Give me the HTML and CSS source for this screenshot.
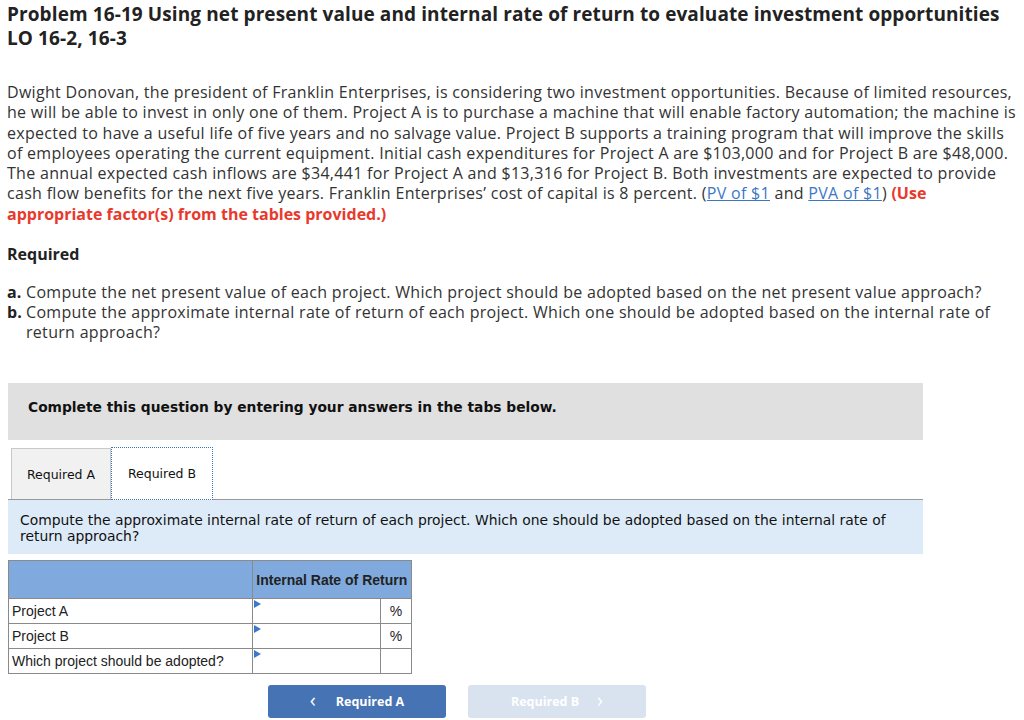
FILE: index.html
```html
<!DOCTYPE html>
<html>
<head>
<meta charset="utf-8">
<link rel="stylesheet" href="styles.css">
</head>
<body>
<div class="page">
  <h1 class="title">Problem 16-19 Using net present value and internal rate of return to evaluate investment opportunities<br>LO 16-2, 16-3</h1>
  <p class="intro">Dwight Donovan, the president of Franklin Enterprises, is considering two investment opportunities. Because of limited resources, he will be able to invest in only one of them. Project A is to purchase a machine that will enable factory automation; the machine is expected to have a useful life of five years and no salvage value. Project B supports a training program that will improve the skills of employees operating the current equipment. Initial cash expenditures for Project A are $103,000 and for Project B are $48,000. The annual expected cash inflows are $34,441 for Project A and $13,316 for Project B. Both investments are expected to provide cash flow benefits for the next five years. Franklin Enterprises’ cost of capital is 8 percent. (<a class="link" href="#">PV of $1</a> and <a class="link" href="#">PVA of $1</a>) <span class="red">(Use appropriate factor(s) from the tables provided.)</span></p>
  <h2 class="req">Required</h2>
  <ol class="reqlist">
    <li><span class="mark">a.</span><span>Compute the net present value of each project. Which project should be adopted based on the net present value approach?</span></li>
    <li><span class="mark">b.</span><span>Compute the approximate internal rate of return of each project. Which one should be adopted based on the internal rate of return approach?</span></li>
  </ol>

  <div class="widget">
    <div class="banner">Complete this question by entering your answers in the tabs below.</div>
    <div class="tabs">
      <div class="tab">Required A</div>
      <div class="tab active">Required B</div>
    </div>
    <div class="prompt">Compute the approximate internal rate of return of each project. Which one should be adopted based on the internal rate of return approach?</div>
    <table class="grid">
      <colgroup><col class="c1"><col class="c2"><col class="c3"></colgroup>
      <tr class="head"><th></th><th colspan="2">Internal Rate of Return</th></tr>
      <tr><td>Project A</td><td class="inp"><span class="tri"></span></td><td class="pct">%</td></tr>
      <tr><td>Project B</td><td class="inp"><span class="tri"></span></td><td class="pct">%</td></tr>
      <tr><td>Which project should be adopted?</td><td class="inp"><span class="tri"></span></td><td class="pct"></td></tr>
    </table>
    <div class="nav">
      <div class="btn prev"><span class="chev">&lsaquo;</span>Required A</div>
      <div class="btn next">Required B<span class="chev">&rsaquo;</span></div>
    </div>
  </div>
</div>
</body>
</html>
```

FILE: styles.css
```css
html, body { margin: 0; padding: 0; background: #fff; }
.page {
  padding: 2px 0 0 7px;
  width: 1012px;
  font-family: "Open Sans", Lato, sans-serif;
  color: #333;
}
.title {
  margin: 0;
  font-size: 19px;
  line-height: 24px;
  font-weight: 700;
  letter-spacing: 0.1px;
  color: #222;
}
.intro {
  margin: 32px 0 0 0;
  font-size: 16px;
  letter-spacing: 0.3px;
  line-height: 20.3px;
}
.link { color: #3b78c4; text-decoration: underline; }
.red { color: #e8392c; font-weight: 700; letter-spacing: 0; }
.req {
  margin: 20px 0 0 0;
  font-size: 16px;
  line-height: 20px;
  font-weight: 700;
  color: #222;
}
.reqlist {
  list-style: none;
  margin: 18px 0 0 0;
  padding: 0;
  font-size: 16px;
  letter-spacing: 0.3px;
  line-height: 20px;
}
.reqlist li { display: flex; }
.reqlist .mark { width: 19px; flex: none; font-weight: 700; color: #222; letter-spacing: 0; }

.widget {
  width: 915px;
  margin: 41px 0 0 1px;
  font-family: "DejaVu Sans", Verdana, sans-serif;
  color: #111;
}
.banner {
  background: #e0e0e0;
  height: 57px;
  box-sizing: border-box;
  padding: 16px 20px 0 20px;
  font-size: 13.8px;
  font-weight: 700;
  line-height: 17px;
}
.tabs {
  display: flex;
  align-items: flex-end;
  margin-top: 7px;
  padding-left: 3px;
}
.tab {
  width: 100px;
  height: 51px;
  box-sizing: border-box;
  background: #f1f1f1;
  border: 1px solid #c8c8c8;
  border-bottom: none;
  font-size: 12.5px;
  display: flex;
  align-items: center;
  justify-content: center;
  color: #111;
}
.tab.active {
  width: 102px;
  height: 53px;
  margin-bottom: -1px;
  background: #fff;
  border: 1px dotted #3f73c0;
  position: relative;
  z-index: 1;
}
.prompt {
  background: #ddebf8;
  border-top: 1px solid #999;
  padding: 12px 12px 10px 12px;
  font-size: 13.9px;
  line-height: 16px;
}
.grid {
  margin-top: 6px;
  border-collapse: collapse;
  width: 404px;
  font-family: "Liberation Sans", Arial, sans-serif;
  font-size: 14px;
  color: #222;
}
.grid .c1 { width: 245px; }
.grid .c2 { width: 128px; }
.grid .c3 { width: 31px; }
.grid td, .grid th { border: 1px solid #8a8a8a; padding: 0 3px; }
.grid tr.head { height: 38px; background: #80aade; }
.grid th { font-weight: 700; text-align: left; padding: 0 3px; color: #222; }
.grid tr { height: 25px; }
.grid td.inp { position: relative; padding: 0; }
.grid td.pct { text-align: center; padding: 0; }
.tri {
  position: absolute;
  left: 1px;
  top: 1px;
  width: 0;
  height: 0;
  border-top: 4px solid transparent;
  border-bottom: 4px solid transparent;
  border-left: 7px solid #3b78c8;
}
.nav {
  display: flex;
  gap: 22px;
  margin-top: 11px;
  padding-left: 260px;
}
.btn {
  width: 178px;
  height: 33px;
  border-radius: 3px;
  display: flex;
  align-items: center;
  justify-content: center;
  font-family: "Open Sans", sans-serif;
  font-weight: 700;
  font-size: 12.5px;
  color: #fff;
}
.btn.prev { background: #4673b3; }
.btn.next { background: #d9e3f0; }
.btn .chev { font-size: 20px; font-weight: 400; line-height: 1; margin: -3px 20px 0 0; }
.btn.next .chev { margin: -3px 0 0 18px; }
```
